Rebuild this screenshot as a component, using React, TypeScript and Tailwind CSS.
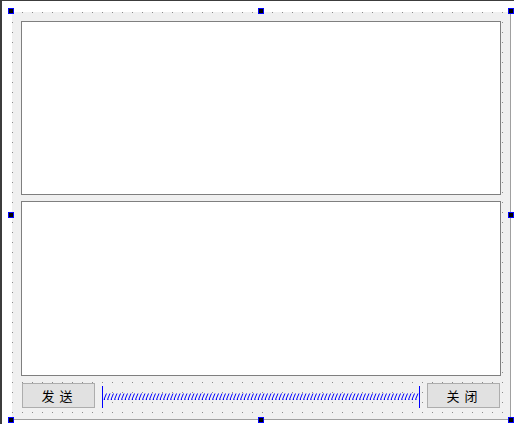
import React from "react";

const handlePos = [
  "left-[6px] top-[7px]",
  "left-[256px] top-[7px]",
  "left-[506px] top-[7px]",
  "left-[6px] top-[211px]",
  "left-[506px] top-[211px]",
  "left-[6px] top-[416px]",
  "left-[256px] top-[416px]",
  "left-[506px] top-[416px]",
];

function Spring() {
  const strokes: string[] = [];
  for (let x = 2; x < 314; x += 3.5) {
    strokes.push(`M${x.toFixed(1)},13.5 L${(x + 2.5).toFixed(1)},7.5 M${x.toFixed(1)},13.5 L${(x + 1).toFixed(1)},13.5`);
  }
  return (
    <svg width="318" height="22" viewBox="0 0 318 22" className="block shrink-0">
      <line x1="0.5" y1="0" x2="0.5" y2="22" stroke="#0000ff" strokeWidth="1" />
      <line x1="317.5" y1="0" x2="317.5" y2="22" stroke="#0000ff" strokeWidth="1" />
      <path d={strokes.join(" ")} stroke="#0000ff" strokeWidth="1" fill="none" />
    </svg>
  );
}

function Btn({ a, b }: { a: string; b: string }) {
  return (
    <div className="w-[73px] h-[25px] shrink-0 bg-[#e1e1e1] border border-[#adadad] flex items-center justify-center gap-[5px] pr-[3px] text-[13px] leading-none text-black font-['Noto_Sans_CJK_SC',sans-serif]">
      <span>{a}</span>
      <span>{b}</span>
    </div>
  );
}

export default function App() {
  return (
    <div className="relative w-[514px] h-[424px] bg-white border-l-2 border-t border-[#3c3c3c] pl-[10px] pt-[11px] overflow-hidden">
      <div className="relative w-[499px] h-[408px] bg-[#f0f0f0] border-r border-b border-[#a0a0a0]">
        <svg className="absolute left-0 top-0" width="498" height="407">
          <defs>
            <pattern id="dots" x="0" y="0" width="10" height="10" patternUnits="userSpaceOnUse">
              <rect x="0" y="0" width="1" height="1" fill="#8c8c8c" />
            </pattern>
          </defs>
          <rect x="0" y="0" width="498" height="407" fill="url(#dots)" />
        </svg>
        <div className="relative flex flex-col pl-[9px] pt-[9px] pr-[9px]">
          <div className="w-[480px] h-[174px] bg-white border border-[#7f7f7f]" />
          <div className="w-[480px] h-[175px] mt-[6px] bg-white border border-[#7f7f7f]" />
          <div className="flex items-center mt-[7px] h-[25px]">
            <div className="ml-[1px]">
              <Btn a="发" b="送" />
            </div>
            <div className="ml-[7px] mt-[2px]">
              <Spring />
            </div>
            <div className="ml-[7px]">
              <Btn a="关" b="闭" />
            </div>
          </div>
        </div>
      </div>
      {handlePos.map((p, i) => (
        <div key={i} className={`absolute w-[6px] h-[6px] bg-black border border-[#0000ff] ${p}`} />
      ))}
    </div>
  );
}
